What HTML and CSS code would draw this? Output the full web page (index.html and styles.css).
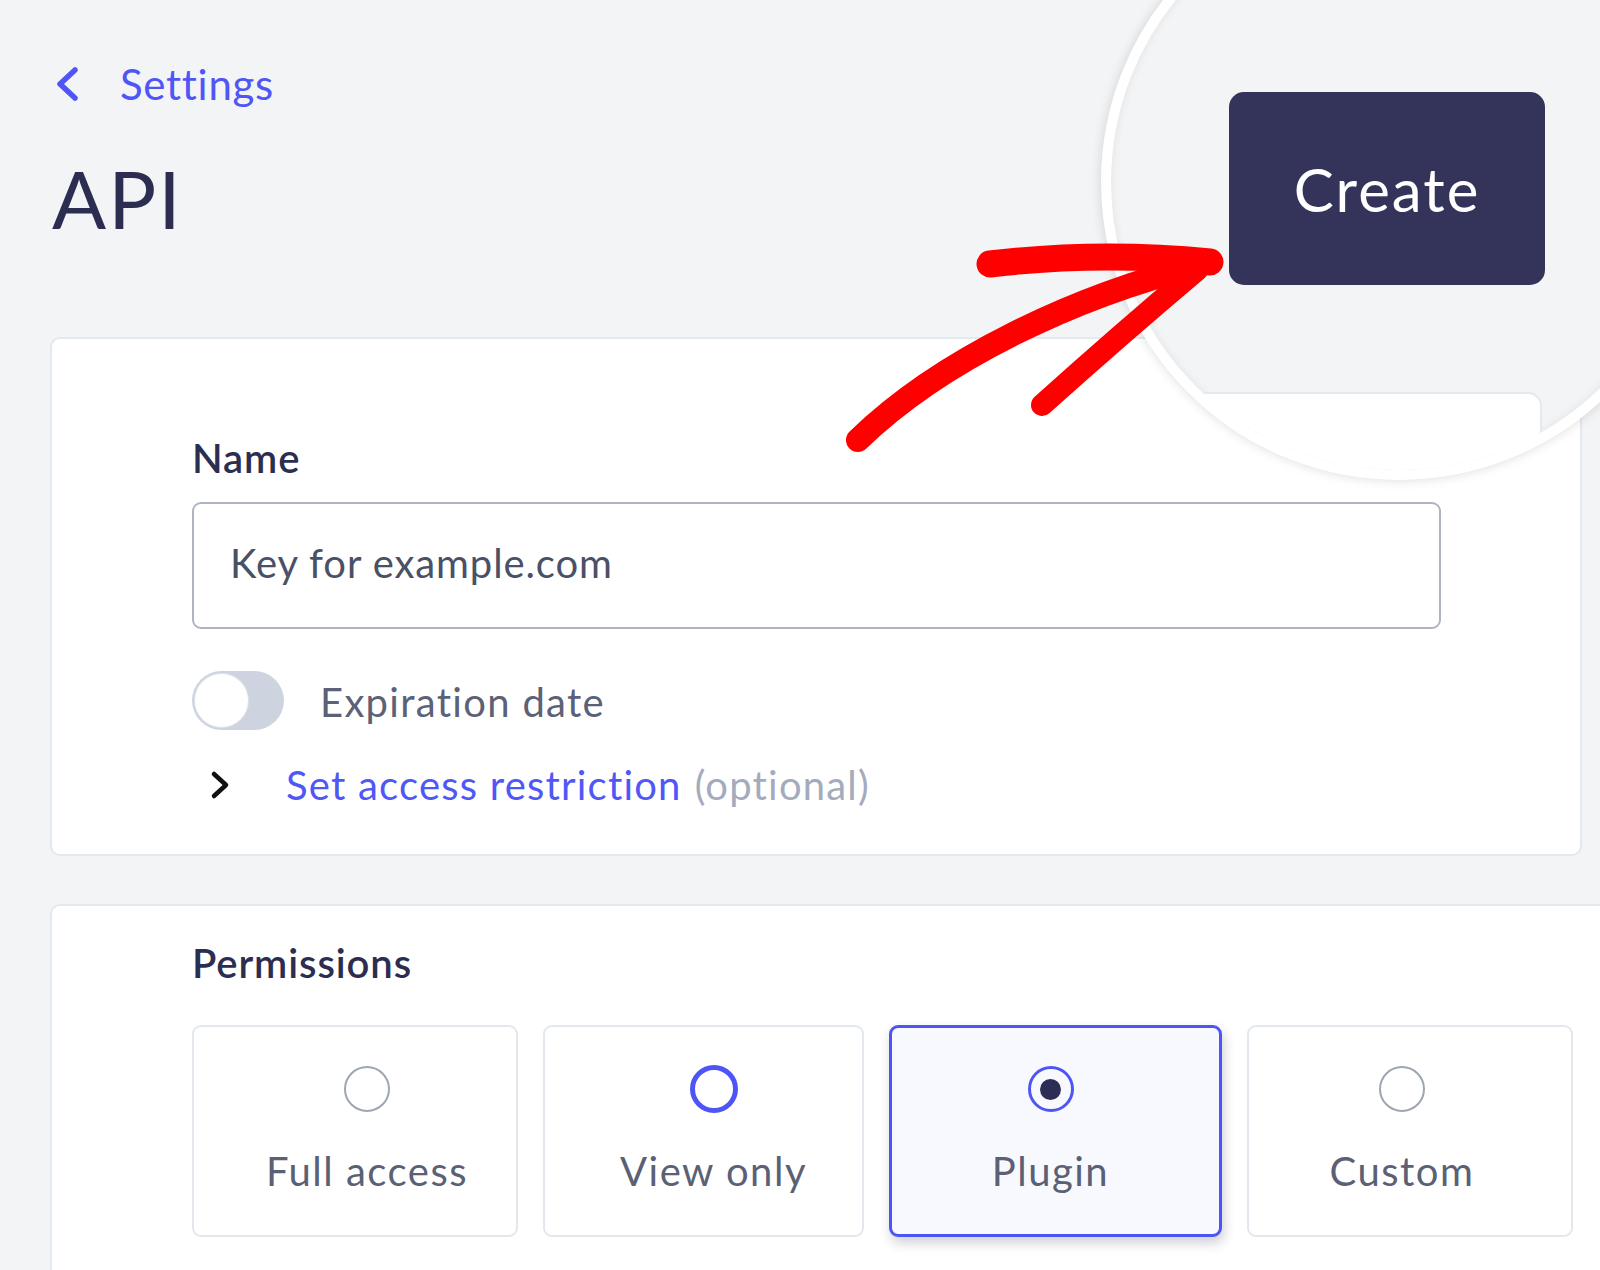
FILE: index.html
```html
<!DOCTYPE html>
<html lang="en">
<head>
<meta charset="utf-8">
<title>API – Settings</title>
<link rel="stylesheet" href="styles.css">
</head>
<body>
<div class="page">
  <header class="head">
    <a class="back" href="#">
      <svg class="back-icon" viewBox="0 0 24 34" width="24" height="34" aria-hidden="true"><path d="M20 3 L5 17 L20 31"/></svg>
      <span class="back-text">Settings</span>
    </a>
    <h1 class="title">API</h1>
  </header>

  <section class="card card-key">
    <div class="field-label">Name</div>
    <div class="input">Key for example.com</div>
    <div class="toggle-row">
      <span class="toggle"><span class="knob"></span></span>
      <span class="toggle-text">Expiration date</span>
    </div>
    <div class="restrict-row">
      <svg class="chev" viewBox="0 0 22 30" width="22" height="30" aria-hidden="true"><path d="M5 4 L17 15 L5 26"/></svg>
      <span class="link">Set access restriction</span>
      <span class="optional">(optional)</span>
    </div>
  </section>

  <section class="card card-perm">
    <div class="field-label">Permissions</div>
    <div class="options">
      <div class="option"><span class="radio"></span><span class="option-label">Full access</span></div>
      <div class="option"><span class="radio radio-focus"></span><span class="option-label">View only</span></div>
      <div class="option option-selected"><span class="radio radio-checked"><span class="dot"></span></span><span class="option-label">Plugin</span></div>
      <div class="option"><span class="radio"></span><span class="option-label">Custom</span></div>
    </div>
  </section>

  <div class="lens">
    <div class="lens-inner">
      <button class="create">Create</button>
      <div class="lens-card"></div>
    </div>
  </div>

  <svg class="arrow" viewBox="820 220 420 250" width="420" height="250" aria-hidden="true">
    <path d="M858 440 C940 360 1075 296 1200 265"/>
    <path class="barb" d="M1042 405 Q1120 335 1197 270"/>
    <path class="top" d="M990 264 Q1100 251 1210 262"/>
  </svg>
</div>
</body>
</html>
```

FILE: styles.css
```css
* { box-sizing: border-box; }

html, body {
  margin: 0;
  padding: 0;
}

body {
  background: #f3f4f6;
  font-family: Lato, "Open Sans", sans-serif;
  color: #2d2e52;
}

.page {
  position: relative;
  width: 1600px;
  height: 1270px;
  overflow: hidden;
  padding: 0 18px 0 50px;
  background: #f3f4f6;
}

/* header */
.back {
  display: flex;
  align-items: center;
  gap: 41px;
  height: 50px;
  margin: 59px 0 0 5px;
  text-decoration: none;
  color: #4f56f5;
  width: max-content;
}

.back-icon path {
  fill: none;
  stroke: #4f56f5;
  stroke-width: 5.5;
  stroke-linecap: round;
  stroke-linejoin: round;
}

.back-text {
  font-size: 42px;
  line-height: 50px;
  letter-spacing: 0.7px;
}

.title {
  margin: 41px 0 0 2px;
  font-size: 80px;
  line-height: 96px;
  font-weight: 400;
  letter-spacing: 2px;
  color: #2d2d52;
}

/* cards */
.card {
  background: #ffffff;
  border: 2px solid #e4e8ef;
  border-radius: 10px;
}

.card-key {
  margin-top: 91px;
  padding: 95px 139px 45px 140px;
}

.field-label {
  font-size: 40px;
  line-height: 48px;
  font-weight: 600;
  letter-spacing: 0.9px;
  color: #2b2e50;
}

.input {
  margin-top: 20px;
  height: 127px;
  border: 2px solid #aeb4c2;
  border-radius: 9px;
  padding: 0 0 5px 36px;
  display: flex;
  align-items: center;
  font-size: 40px;
  letter-spacing: 0.9px;
  color: #4a5065;
}

.toggle-row {
  margin-top: 42px;
  display: flex;
  align-items: center;
  gap: 36px;
}

.toggle {
  width: 92px;
  height: 59px;
  border-radius: 30px;
  background: #cdd4e0;
  display: flex;
  align-items: center;
  padding: 0 3px;
}

.knob {
  width: 53px;
  height: 53px;
  border-radius: 50%;
  background: #ffffff;
  box-shadow: 0 0 0 1px #dfe3ea;
}

.toggle-text {
  font-size: 40px;
  line-height: 48px;
  letter-spacing: 1.3px;
  color: #5b6177;
  padding-top: 2px;
}

.restrict-row {
  margin-top: 31px;
  display: flex;
  align-items: center;
  height: 48px;
  padding-left: 17px;
  font-size: 40px;
  letter-spacing: 1.2px;
}

.chev path {
  fill: none;
  stroke: #111111;
  stroke-width: 4.5;
  stroke-linecap: round;
  stroke-linejoin: round;
}

.link {
  margin-left: 55px;
  color: #4f57f6;
}

.optional {
  margin-left: 13px;
  color: #a4abbd;
}

.card-perm {
  margin-top: 48px;
  margin-right: -200px;
  padding: 33px 0 60px 140px;
  border-radius: 10px;
}

.options {
  margin-top: 38px;
  display: grid;
  grid-template-columns: 326px 321px 333px 326px;
  gap: 25px;
}

.option {
  height: 212px;
  border: 2px solid #e3e7ee;
  border-radius: 9px;
  background: #ffffff;
  display: flex;
  flex-direction: column;
  align-items: center;
  padding-top: 39px;
}

/* optical offsets of the option contents */
.option:nth-child(1) { padding-left: 24px; }
.option:nth-child(2) { padding-left: 20px; }
.option:nth-child(3) { padding-right: 10px; }
.option:nth-child(4) { padding-right: 16px; }

.option-selected {
  border: 3px solid #4f55f5;
  background: #f8f9fe;
  padding-top: 38px;
  box-shadow: 2px 6px 12px rgba(40, 40, 70, 0.22);
}

.radio {
  width: 46px;
  height: 46px;
  border-radius: 50%;
  border: 2px solid #9ea5b3;
  display: flex;
  align-items: center;
  justify-content: center;
}

.radio-focus {
  border: 5px solid #4f55f5;
  width: 48px;
  height: 48px;
  margin-top: -1px;
  margin-bottom: -1px;
}

.radio-checked {
  border: 3px solid #4f55f5;
}

.dot {
  width: 21px;
  height: 21px;
  border-radius: 50%;
  background: #2e2d55;
}

.option-label {
  margin-top: 35px;
  font-size: 40px;
  line-height: 48px;
  letter-spacing: 1.5px;
  color: #5a6175;
}

/* magnifier lens over the header */
.lens {
  position: absolute;
  left: 1101px;
  top: -116px;
  width: 596px;
  height: 596px;
  border-radius: 50%;
  border: 10px solid #ffffff;
  background: #f3f4f6;
  overflow: hidden;
  box-shadow: 0 0 12px rgba(0, 0, 0, 0.14), inset 0 0 10px rgba(0, 0, 0, 0.08);
}

.lens-inner {
  display: flex;
  flex-direction: column;
  align-items: flex-start;
  padding: 198px 0 0 118px;
}

.create {
  width: 316px;
  height: 193px;
  border: none;
  border-radius: 15px;
  background: #34335a;
  color: #ffffff;
  font-family: Lato, "Open Sans", sans-serif;
  font-size: 60px;
  letter-spacing: 2px;
  padding: 0;
}

.lens-card {
  margin: 107px 0 0 -200px;
  width: 513px;
  height: 300px;
  background: #ffffff;
  border: 2px solid #e4e8ef;
  border-radius: 0 14px 0 0;
}

/* hand drawn red arrow */
.arrow {
  position: absolute;
  left: 820px;
  top: 220px;
  overflow: visible;
}

.arrow path {
  fill: none;
  stroke: #ff0000;
  stroke-width: 24;
  stroke-linecap: round;
  stroke-linejoin: round;
}

.arrow .barb {
  stroke-width: 22;
}

.arrow .top {
  stroke-width: 27;
}
```
